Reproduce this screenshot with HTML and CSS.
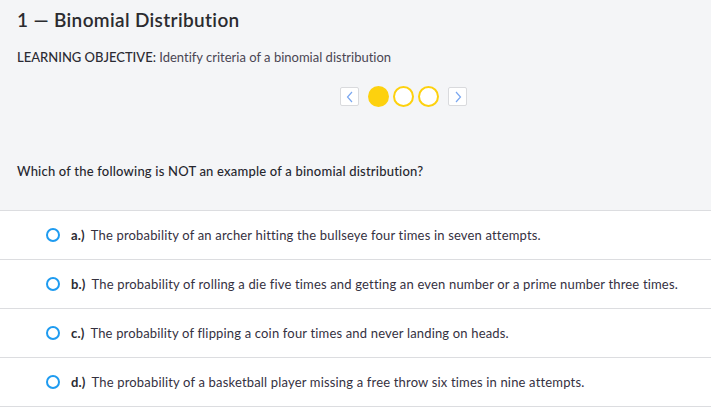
FILE: index.html
```html
<!DOCTYPE html>
<html>
<head>
<meta charset="utf-8">
<link rel="stylesheet" href="styles.css">
</head>
<body>
<div class="header">
  <h1 class="title">1 — Binomial Distribution</h1>
  <p class="objective"><span class="obj-label">LEARNING OBJECTIVE:</span> Identify criteria of a binomial distribution</p>
  <div class="nav">
    <span class="nav-btn"><svg width="10" height="12" viewBox="0 0 10 12"><path d="M7 1 L2.5 6 L7 11" fill="none" stroke="#7aa7f0" stroke-width="1.2"/></svg></span>
    <span class="dots">
      <span class="dot filled"></span>
      <span class="dot"></span>
      <span class="dot"></span>
    </span>
    <span class="nav-btn"><svg width="10" height="12" viewBox="0 0 10 12"><path d="M3 1 L7.5 6 L3 11" fill="none" stroke="#7aa7f0" stroke-width="1.2"/></svg></span>
  </div>
  <p class="question">Which of the following is NOT an example of a binomial distribution?</p>
</div>
<ul class="options">
  <li class="option"><span class="radio"></span><span class="letter">a.)</span><span class="text">The probability of an archer hitting the bullseye four times in seven attempts.</span></li>
  <li class="option"><span class="radio"></span><span class="letter">b.)</span><span class="text">The probability of rolling a die five times and getting an even number or a prime number three times.</span></li>
  <li class="option"><span class="radio"></span><span class="letter">c.)</span><span class="text">The probability of flipping a coin four times and never landing on heads.</span></li>
  <li class="option"><span class="radio"></span><span class="letter">d.)</span><span class="text">The probability of a basketball player missing a free throw six times in nine attempts.</span></li>
</ul>
</body>
</html>
```
FILE: styles.css
```css
html, body {
  margin: 0;
  padding: 0;
  background: #ffffff;
  font-family: Lato, "Open Sans", Arial, sans-serif;
  color: #2b2b33;
  font-variant-ligatures: none;
}
.header {
  background: #f4f5f7;
  padding: 8px 17px 0 17px;
  height: 202px;
  border-bottom: 1px solid #dcdde0;
}
.title {
  margin: 0;
  font-size: 19px;
  line-height: 24px;
  font-weight: 600;
  letter-spacing: 0.35px;
  color: #2b2b2f;
}
.objective {
  margin: 17px 0 0 0;
  font-size: 13px;
  line-height: 16px;
  color: #4a4653;
}
.obj-label {
  color: #2b2b33;
  font-weight: 500;
}
.nav {
  display: flex;
  align-items: center;
  margin: 21px 0 0 323px;
  height: 21px;
}
.nav-btn {
  width: 17px;
  height: 17px;
  border: 1px solid #d9dadd;
  border-radius: 2px;
  background: #ffffff;
  display: flex;
  align-items: center;
  justify-content: center;
}
.dots {
  display: flex;
  gap: 4px;
  margin: 0 9px 0 9px;
}
.dot {
  width: 17px;
  height: 17px;
  border-radius: 50%;
  border: 2px solid #fdd10e;
  background: #ffffff;
}
.dot.filled {
  background: #fdd10e;
}
.question {
  margin: 56px 0 0 0;
  font-size: 13px;
  line-height: 16px;
  font-weight: 500;
  letter-spacing: 0.2px;
  color: #26262e;
}
.options {
  list-style: none;
  margin: 0;
  padding: 0;
}
.option {
  display: flex;
  align-items: center;
  height: 48px;
  border-bottom: 1px solid #dcdde0;
  padding-left: 46px;
  font-size: 13px;
  letter-spacing: 0.17px;
  color: #35313f;
}
.radio {
  width: 10px;
  height: 10px;
  border: 2px solid #1e9bf0;
  border-radius: 50%;
  margin-right: 11px;
}
.letter {
  font-weight: 700;
  color: #2b2b33;
  margin-right: 6px;
}
```
